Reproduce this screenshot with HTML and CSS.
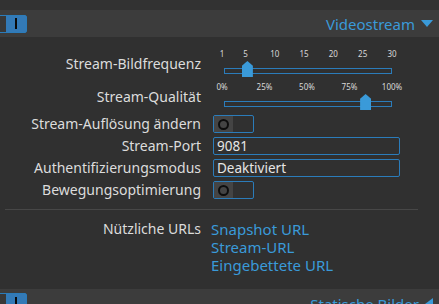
FILE: index.html
```html
<!DOCTYPE html>
<html>
<head>
<meta charset="utf-8">
<link rel="stylesheet" href="styles.css">
</head>
<body>
<div class="page">
  <div class="topgap"></div>
  <header class="panel-head">
    <span class="toggle on head-toggle"><span class="knob"><span class="bar"></span></span></span>
    <span class="title">Videostream <span class="tri-down"></span></span>
  </header>
  <div class="form">
    <div class="row slider-row">
      <span class="lbl">Stream-Bildfrequenz</span>
      <div class="slider">
        <div class="ticks">
          <span style="left:0%">1</span>
          <span style="left:13.79%">5</span>
          <span style="left:31.03%">10</span>
          <span style="left:48.28%">15</span>
          <span style="left:65.52%">20</span>
          <span style="left:82.76%">25</span>
          <span style="left:100%">30</span>
        </div>
        <div class="track"><span class="handle" style="left:13.79%"></span></div>
      </div>
    </div>
    <div class="row slider-row">
      <span class="lbl">Stream-Qualität</span>
      <div class="slider">
        <div class="ticks">
          <span style="left:0%">0%</span>
          <span style="left:25%">25%</span>
          <span style="left:50%">50%</span>
          <span style="left:75%">75%</span>
          <span style="left:100%">100%</span>
        </div>
        <div class="track"><span class="handle" style="left:85%"></span></div>
      </div>
    </div>
    <div class="row">
      <span class="lbl">Stream-Auflösung ändern</span>
      <span class="toggle"><span class="knob"><span class="ring"></span></span></span>
    </div>
    <div class="row">
      <span class="lbl">Stream-Port</span>
      <span class="input">9081</span>
    </div>
    <div class="row">
      <span class="lbl">Authentifizierungsmodus</span>
      <span class="input">Deaktiviert</span>
    </div>
    <div class="row">
      <span class="lbl">Bewegungsoptimierung</span>
      <span class="toggle"><span class="knob"><span class="ring"></span></span></span>
    </div>
  </div>
  <div class="divider"></div>
  <div class="urls">
    <span class="lbl">Nützliche URLs</span>
    <div class="links">
      <a class="link">Snapshot URL</a>
      <a class="link">Stream-URL</a>
      <a class="link">Eingebettete URL</a>
    </div>
  </div>
  <header class="panel-head bottom">
    <span class="toggle on head-toggle"><span class="knob"><span class="bar"></span></span></span>
    <span class="title">Statische Bilder <span class="tri-left"></span></span>
  </header>
</div>
</body>
</html>
```
FILE: styles.css
```css
html, body {
  margin: 0;
  padding: 0;
  background: #303030;
}
.page {
  width: 439px;
  height: 304px;
  overflow: hidden;
  font-family: "Noto Sans", "Open Sans", sans-serif;
  color: #dcdcdc;
  font-size: 14px;
  background: #303030;
}
.topgap {
  height: 10px;
  background: #323232;
}
.panel-head {
  height: 27px;
  background: #3c3c3c;
  display: flex;
  align-items: center;
  justify-content: space-between;
  padding-right: 6px;
}
.panel-head.bottom {
  margin-top: 15px;
  align-items: flex-start;
  padding-top: 4px;
  box-sizing: border-box;
}
.title {
  color: #3a9ad9;
  font-size: 15px;
  display: flex;
  align-items: center;
  gap: 6px;
}
.panel-head.bottom .title {
  margin-top: 1px;
}
.tri-down {
  width: 0;
  height: 0;
  border-left: 6px solid transparent;
  border-right: 6px solid transparent;
  border-top: 7px solid #3a9ad9;
}
.tri-left {
  width: 0;
  height: 0;
  border-top: 6px solid transparent;
  border-bottom: 6px solid transparent;
  border-right: 8px solid #3a9ad9;
}
.toggle {
  width: 41px;
  height: 18px;
  box-sizing: border-box;
  border: 1px solid #2b7cba;
  border-radius: 2px;
  display: flex;
  background: #303030;
  flex: none;
}
.toggle .knob {
  width: 19px;
  height: 16px;
  background: #444444;
  display: flex;
  align-items: center;
  justify-content: center;
}
.toggle.on {
  justify-content: flex-end;
  background: #383838;
}
.toggle.on .knob {
  width: 20px;
  background: #337ab7;
}
.head-toggle {
  margin-left: -14px;
}
.bar {
  width: 2px;
  height: 11px;
  background: #0a0a0a;
}
.ring {
  width: 7px;
  height: 7px;
  border: 2px solid #0d0d0d;
  border-radius: 50%;
}
.form {
  padding-top: 12px;
  display: flex;
  flex-direction: column;
  gap: 4px;
}
.row {
  display: flex;
  align-items: center;
  gap: 12px;
}
.lbl {
  width: 201px;
  text-align: right;
  flex: none;
  line-height: 18px;
  white-space: nowrap;
}
.slider {
  margin-left: 9px;
  width: 170px;
  display: flex;
  flex-direction: column;
}
.ticks {
  position: relative;
  height: 10px;
  font-size: 8px;
  line-height: 10px;
  color: #d8d8d8;
}
.ticks span {
  position: absolute;
  top: 0;
  transform: translateX(-50%);
  white-space: nowrap;
}
.track {
  position: relative;
  margin-top: 9px;
  margin-left: 2px;
  margin-bottom: 4px;
  height: 6px;
  box-sizing: border-box;
  border: 1px solid #2b7cba;
  background: #303030;
}
.handle {
  position: absolute;
  top: -8px;
  width: 11px;
  height: 16px;
  margin-left: -6px;
  background: #3a9ad9;
  clip-path: polygon(50% 0, 100% 30%, 100% 100%, 0 100%, 0 30%);
}
.input {
  width: 187px;
  height: 18px;
  box-sizing: border-box;
  border: 1px solid #2b7cba;
  border-radius: 2px;
  padding-left: 3px;
  line-height: 16px;
  color: #e6e6e6;
  font-size: 13.5px;
}
.divider {
  margin: 10px 21px 0 5px;
  height: 1px;
  background: #474747;
}
.urls {
  margin-top: 10px;
  display: flex;
  gap: 10px;
}
.links {
  display: flex;
  flex-direction: column;
}
.link {
  color: #3a9ad9;
  font-size: 15px;
  line-height: 18px;
}
```
